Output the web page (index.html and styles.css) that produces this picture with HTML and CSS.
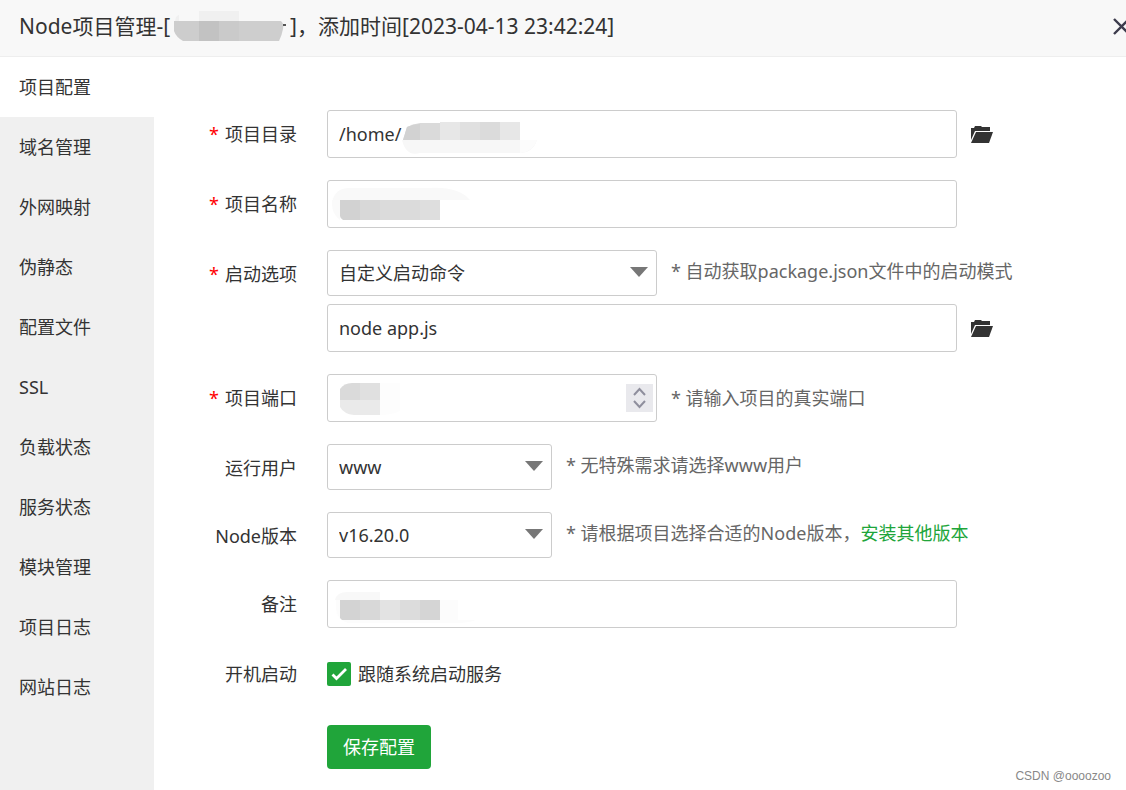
FILE: index.html
```html
<!DOCTYPE html>
<html lang="zh-CN">
<head>
  <meta charset="UTF-8">
  <meta name="viewport" content="width=device-width, initial-scale=1.0">
  <title>Node项目管理</title>
  <link rel="stylesheet" href="styles.css">
</head>
<body>
  <!-- Title bar -->
  <header class="title-bar">
    <h1 class="title">
      <span>Node项目管理-[</span>
      <svg class="title-mask" width="112" height="30" viewBox="0 0 112 30" aria-hidden="true">
        <path d="M25 0h40v10H25z" fill="#f0f0f0"/>
        <path d="M2 6q2-2 3-2v6H1z" fill="#f0f0f0"/>
        <path d="M0 10h25v20H9Q2 26 0 20z" fill="#cdcdcd"/>
        <path d="M25 10h20v20H25z" fill="#c2c2c2"/>
        <path d="M45 10h20v20H45z" fill="#cacaca"/>
        <path d="M65 10h42q3 2 2 8t-4 12H65z" fill="#cecece"/>
        <path d="M109 13h3v2h-3z" fill="#555"/>
      </svg>
      <span>]，添加时间[2023-04-13 23:42:24]</span>
    </h1>
    <button class="close" type="button" aria-label="关闭">
      <svg width="17" height="17" viewBox="0 0 17 17"><path d="M1 1l15 15M16 1L1 16" stroke="#3c3b4c" stroke-width="2.4"/></svg>
    </button>
  </header>

  <div class="layout">
    <!-- Side menu -->
    <nav class="side-menu">
      <a class="menu-item active" href="#">项目配置</a>
      <a class="menu-item" href="#">域名管理</a>
      <a class="menu-item" href="#">外网映射</a>
      <a class="menu-item" href="#">伪静态</a>
      <a class="menu-item" href="#">配置文件</a>
      <a class="menu-item" href="#">SSL</a>
      <a class="menu-item" href="#">负载状态</a>
      <a class="menu-item" href="#">服务状态</a>
      <a class="menu-item" href="#">模块管理</a>
      <a class="menu-item" href="#">项目日志</a>
      <a class="menu-item" href="#">网站日志</a>
    </nav>

    <!-- Project form -->
    <form class="config-form">
      <div class="row">
        <label class="row-label" for="path"><span class="required">*</span>项目目录</label>
        <div class="field field-wide">
          <input class="control" id="path" type="text" value="/home/">
          <svg class="mask" width="220" height="46" viewBox="0 0 220 46" aria-hidden="true">
            <path d="M75 29l4-13q6-3 13-4h20v17z" fill="#dadada"/>
            <path d="M75 29l4-13q6-3 13-3v16z" fill="#d2d2d2"/>
            <path d="M112 11h20v18h-20z" fill="#e7e7e7"/>
            <path d="M132 11h20v18h-20z" fill="#e0e0e0"/>
            <path d="M152 11h20v18h-20z" fill="#dbdbdb"/>
            <path d="M172 11h20v18h-20z" fill="#e7e7e7"/>
            <path d="M74 29h135q-4 13-18 13H92q-14 4-18-13z" fill="#f7f7f7"/>
            <path d="M192 29h17q-4 12-17 13z" fill="#fcfcfc"/>
          </svg>
        </div>
        <button class="folder" type="button" aria-label="选择目录">
          <svg width="24" height="18" viewBox="0 0 24 18"><path d="M1 15V3h3l1-2h6l1 1h8v4H5z" fill="#333"/><path d="M6 7h17l-4 11H1z" fill="#333"/></svg>
        </button>
      </div>

      <div class="row">
        <label class="row-label" for="name"><span class="required">*</span>项目名称</label>
        <div class="field field-wide">
          <input class="control" id="name" type="text">
          <svg class="mask" width="220" height="46" viewBox="0 0 220 46" aria-hidden="true">
            <path d="M4 22Q6 8 20 7h80q30-2 42 12H5z" fill="#f9f9f9"/>
            <path d="M4 19h8v20q-8-6-8-16z" fill="#fafafa"/>
            <path d="M12 19h20v20H15q-3-2-3-4z" fill="#d2d2d2"/>
            <path d="M32 19h20v20H32z" fill="#d8d8d8"/>
            <path d="M52 19h40v20H52z" fill="#dbdbdb"/>
            <path d="M92 19h20v20H92z" fill="#dedede"/>
          </svg>
        </div>
      </div>

      <div class="row row-joined">
        <label class="row-label" for="mode"><span class="required">*</span>启动选项</label>
        <div class="field field-medium">
          <select class="control select" id="mode"><option>自定义启动命令</option></select>
          <svg class="arrow" width="18" height="10" viewBox="0 0 18 10" aria-hidden="true"><path d="M0 0h18l-9 10z" fill="#777"/></svg>
        </div>
        <span class="hint hint-select">* 自动获取package.json文件中的启动模式</span>
      </div>

      <div class="row">
        <span class="row-label"></span>
        <div class="field field-wide">
          <input class="control" type="text" value="node app.js" aria-label="启动命令">
        </div>
        <button class="folder" type="button" aria-label="选择文件">
          <svg width="24" height="18" viewBox="0 0 24 18"><path d="M1 15V3h3l1-2h6l1 1h8v4H5z" fill="#333"/><path d="M6 7h17l-4 11H1z" fill="#333"/></svg>
        </button>
      </div>

      <div class="row">
        <label class="row-label" for="port"><span class="required">*</span>项目端口</label>
        <div class="field field-medium">
          <input class="control" id="port" type="number">
          <svg class="mask" width="90" height="46" viewBox="0 0 90 46" aria-hidden="true">
            <path d="M52 8h20v28q-8 4-20 4z" fill="#fdfdfd"/>
            <path d="M12 25V14q4-6 12-6h8v17z" fill="#dadada"/>
            <path d="M32 8h20v17H32z" fill="#e0e0e0"/>
            <path d="M12 25h40v15H26q-10-1-14-8z" fill="#eaeaea"/>
          </svg>
          <svg class="spinner" width="27" height="28" viewBox="0 0 27 28" aria-hidden="true"><path d="M0 0h27v28H0z" fill="#e9e9ed"/><path d="M8 11l5.500-6 5.500 6M8 17l5.500 6 5.500-6" fill="none" stroke="#8f8f9d" stroke-width="2"/></svg>
        </div>
        <span class="hint">* 请输入项目的真实端口</span>
      </div>

      <div class="row">
        <label class="row-label" for="user">运行用户</label>
        <div class="field field-small">
          <select class="control select" id="user"><option>www</option></select>
          <svg class="arrow" width="18" height="10" viewBox="0 0 18 10" aria-hidden="true"><path d="M0 0h18l-9 10z" fill="#777"/></svg>
        </div>
        <span class="hint hint-select">* 无特殊需求请选择www用户</span>
      </div>

      <div class="row">
        <label class="row-label" for="version">Node版本</label>
        <div class="field field-small">
          <select class="control select" id="version"><option>v16.20.0</option></select>
          <svg class="arrow" width="18" height="10" viewBox="0 0 18 10" aria-hidden="true"><path d="M0 0h18l-9 10z" fill="#777"/></svg>
        </div>
        <span class="hint hint-select">* 请根据项目选择合适的Node版本，<a class="link" href="#">安装其他版本</a></span>
      </div>

      <div class="row">
        <label class="row-label" for="remark">备注</label>
        <div class="field field-wide">
          <input class="control" id="remark" type="text">
          <svg class="mask" width="220" height="46" viewBox="0 0 220 46" aria-hidden="true">
            <path d="M7 19q2-8 12-8h33v8z" fill="#f8f8f8"/>
            <path d="M8 19h122v20h18q-8 3-18 3H20Q8 38 8 26z" fill="#fcfcfc"/>
            <path d="M12 19h20v20H14l-2-2z" fill="#d3d3d3"/>
            <path d="M32 19h20v20H32z" fill="#d8d8d8"/>
            <path d="M52 19h20v20H52z" fill="#e3e3e3"/>
            <path d="M72 19h20v20H72z" fill="#dcdcdc"/>
            <path d="M92 19h20v20H92z" fill="#d5d5d5"/>
          </svg>
        </div>
      </div>

      <div class="row">
        <span class="row-label">开机启动</span>
        <label class="check">
          <input class="check-input" type="checkbox" checked>
          <svg class="check-mark" width="24" height="24" viewBox="0 0 24 24" aria-hidden="true"><path d="M5.500 12.500l4 4L19 7" fill="none" stroke="#fff" stroke-width="2.800"/></svg>
          <span>跟随系统启动服务</span>
        </label>
      </div>

      <div class="row row-actions">
        <span class="row-label"></span>
        <button class="save" type="button">保存配置</button>
      </div>
    </form>
  </div>

  <div class="watermark">CSDN @oooozoo</div>
</body>
</html>
```

FILE: styles.css
```css
* {
  box-sizing: border-box;
}

body {
  margin: 0;
  min-height: 100vh;
  display: flex;
  flex-direction: column;
  position: relative;
  font-family: "Noto Sans", "Noto Sans CJK SC", sans-serif;
  font-size: 18px;
  line-height: 24px;
  color: #333;
  background: #fff;
}

button {
  padding: 0;
  border: none;
  background: none;
  font: inherit;
  cursor: pointer;
}

/* Title bar */
.title-bar {
  display: flex;
  align-items: center;
  justify-content: space-between;
  height: 57px;
  padding: 0 0 4px 19px;
  background: #f8f8f8;
  border-bottom: 1px solid #eee;
}

.title {
  display: flex;
  gap: 4px;
  margin: 0;
  font-size: 21px;
  font-weight: normal;
  line-height: 30px;
  white-space: nowrap;
}

.title-mask {
  flex: none;
}

.close {
  width: 13px;
  height: 17px;
  overflow: hidden;
}

.close svg {
  display: block;
}

/* Side menu */
.layout {
  display: flex;
  flex: 1;
}

.side-menu {
  flex: none;
  width: 154px;
  background: #f0f0f0;
}

.menu-item {
  display: block;
  padding-left: 19px;
  line-height: 60px;
  color: #333;
  text-decoration: none;
}

.menu-item.active {
  background: #fff;
}

/* Form */
.config-form {
  flex: 1;
  min-width: 0;
  padding: 53px 20px 20px 0;
}

.row {
  display: flex;
  align-items: flex-start;
  margin-bottom: 22px;
}

.row-joined {
  margin-bottom: 8px;
}

.row-label {
  flex: none;
  width: 173px;
  padding-right: 30px;
  line-height: 48px;
  height: 46px;
  text-align: right;
}

.required {
  margin-right: 6px;
  color: #f00;
}

.field {
  position: relative;
}

.field-wide {
  flex: 0 1 630px;
}

.field-medium {
  flex: 0 1 330px;
}

.field-small {
  flex: 0 1 225px;
}

.control {
  display: block;
  width: 100%;
  height: 48px;
  padding: 0 11px;
  border: 1px solid #ccc;
  border-radius: 3px;
  background: #fff;
  color: #333;
  font: inherit;
  appearance: none;
}

.control[type="number"] {
  appearance: textfield;
}

.select {
  height: 46px;
}

.arrow {
  position: absolute;
  top: 17px;
  right: 9px;
  pointer-events: none;
}

.spinner {
  position: absolute;
  top: 10px;
  right: 4px;
}

.mask {
  position: absolute;
  top: 1px;
  left: 1px;
  pointer-events: none;
}

.folder {
  display: flex;
  align-items: center;
  height: 48px;
  margin-left: 13px;
}

.hint {
  margin-left: 14px;
  line-height: 48px;
  color: #666;
  white-space: nowrap;
}

.hint-select {
  line-height: 42px;
}

.link {
  color: #20a53a;
  text-decoration: none;
}

/* Checkbox and save button */
.check {
  display: flex;
  align-items: center;
  position: relative;
  gap: 7px;
  height: 48px;
}

.check-input {
  width: 24px;
  height: 24px;
  margin: 0;
  border-radius: 2px;
  background: #20a53a;
  appearance: none;
}

.check-mark {
  position: absolute;
  top: 12px;
  left: 0;
  display: none;
}

.check-input:checked + .check-mark {
  display: block;
}

.row-actions {
  margin: 27px 0 0;
}

.save {
  height: 44px;
  padding: 0 16px;
  border-radius: 4px;
  background: #20a53a;
  color: #fff;
}

.watermark {
  position: absolute;
  right: 15px;
  bottom: 7px;
  font-family: "Liberation Sans", Arial, sans-serif;
  font-size: 12px;
  line-height: 16px;
  color: #888;
}
```
